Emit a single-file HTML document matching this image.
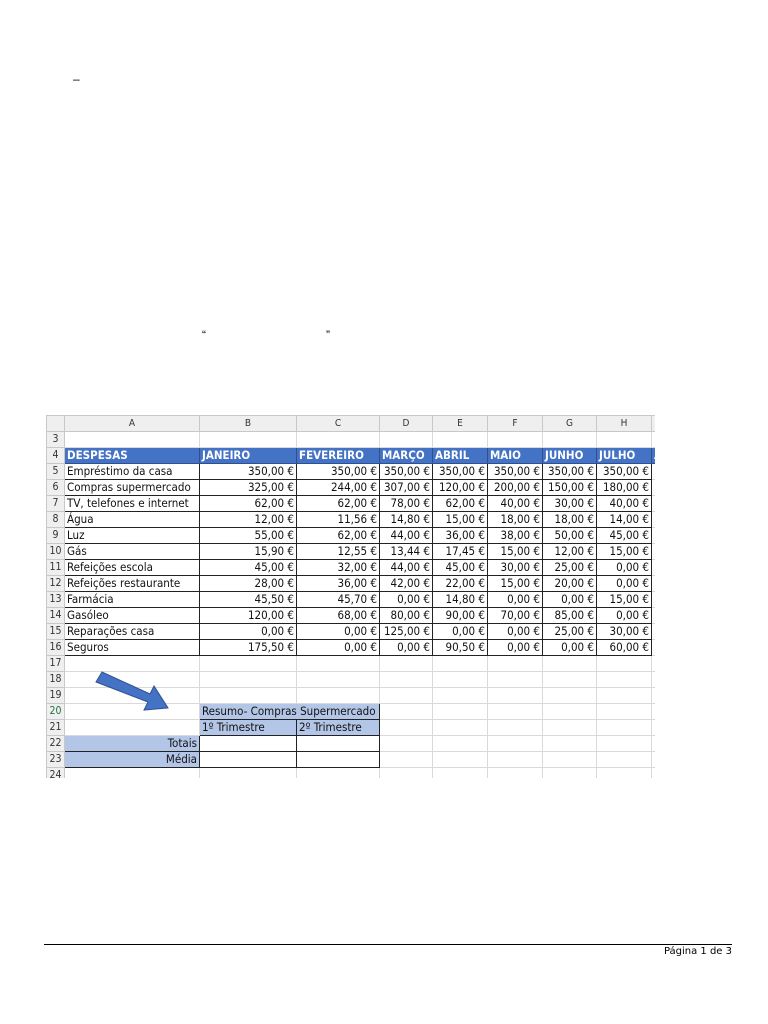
<!DOCTYPE html>
<html><head><meta charset="utf-8"><style>
body{margin:0;width:768px;height:1024px;background:#fff;position:relative;overflow:hidden;font-family:"Liberation Sans","DejaVu Sans",sans-serif}
.wrap{position:absolute;left:46px;top:415px;width:609px;height:363px;overflow:hidden}
table{border-collapse:collapse;table-layout:fixed;font-size:11.5px;font-family:"DejaVu Sans Condensed","Liberation Sans",sans-serif;width:635px}
td{height:15px;padding:0 2px;border:1px solid #d9d9d9;white-space:nowrap;overflow:hidden;line-height:15px;color:#111}
td.n{background:#efefef;color:#333;font-size:10.5px;padding:0;text-align:center;border-color:#c8c8c8}
tr.h td{background:#efefef;text-align:center;font-size:10px;color:#333;border-color:#c8c8c8}
tr.b td.c{background:#4472c4;color:#fff;font-weight:bold;border-color:#2f4f8f}
td.d{border:1px solid #222;text-align:right}
td.l{border:1px solid #222;text-align:left}
td.s{background:#b4c6e7;border:1px solid #222}
td.w{border:1px solid #222}
.foot{position:absolute;left:44px;top:944px;width:688px;border-top:1px solid #000}
</style></head><body>
<div style="position:absolute;left:73px;top:72px;font-size:12px">–</div>
<div style="position:absolute;left:202px;top:328px;font-size:12px">“</div>
<div style="position:absolute;left:326px;top:328px;font-size:12px">”</div>
<div class="wrap"><table>
<colgroup><col style="width:18px"><col style="width:135px"><col style="width:97px"><col style="width:83px"><col style="width:53px"><col style="width:55px"><col style="width:55px"><col style="width:54px"><col style="width:55px"><col style="width:30px"></colgroup>
<tr class="h"><td></td><td>A</td><td>B</td><td>C</td><td>D</td><td>E</td><td>F</td><td>G</td><td>H</td><td></td></tr>
<tr><td class="n">3</td><td></td><td></td><td></td><td></td><td></td><td></td><td></td><td></td><td></td></tr>
<tr class="b"><td class="n">4</td><td class="c">DESPESAS</td><td class="c">JANEIRO</td><td class="c">FEVEREIRO</td><td class="c">MARÇO</td><td class="c">ABRIL</td><td class="c">MAIO</td><td class="c">JUNHO</td><td class="c">JULHO</td><td class="c">A</td></tr>
<tr><td class="n">5</td><td class="l">Empréstimo da casa</td><td class="d">350,00 €</td><td class="d">350,00 €</td><td class="d">350,00 €</td><td class="d">350,00 €</td><td class="d">350,00 €</td><td class="d">350,00 €</td><td class="d">350,00 €</td><td></td></tr>
<tr><td class="n">6</td><td class="l">Compras supermercado</td><td class="d">325,00 €</td><td class="d">244,00 €</td><td class="d">307,00 €</td><td class="d">120,00 €</td><td class="d">200,00 €</td><td class="d">150,00 €</td><td class="d">180,00 €</td><td></td></tr>
<tr><td class="n">7</td><td class="l">TV, telefones e internet</td><td class="d">62,00 €</td><td class="d">62,00 €</td><td class="d">78,00 €</td><td class="d">62,00 €</td><td class="d">40,00 €</td><td class="d">30,00 €</td><td class="d">40,00 €</td><td></td></tr>
<tr><td class="n">8</td><td class="l">Água</td><td class="d">12,00 €</td><td class="d">11,56 €</td><td class="d">14,80 €</td><td class="d">15,00 €</td><td class="d">18,00 €</td><td class="d">18,00 €</td><td class="d">14,00 €</td><td></td></tr>
<tr><td class="n">9</td><td class="l">Luz</td><td class="d">55,00 €</td><td class="d">62,00 €</td><td class="d">44,00 €</td><td class="d">36,00 €</td><td class="d">38,00 €</td><td class="d">50,00 €</td><td class="d">45,00 €</td><td></td></tr>
<tr><td class="n">10</td><td class="l">Gás</td><td class="d">15,90 €</td><td class="d">12,55 €</td><td class="d">13,44 €</td><td class="d">17,45 €</td><td class="d">15,00 €</td><td class="d">12,00 €</td><td class="d">15,00 €</td><td></td></tr>
<tr><td class="n">11</td><td class="l">Refeições escola</td><td class="d">45,00 €</td><td class="d">32,00 €</td><td class="d">44,00 €</td><td class="d">45,00 €</td><td class="d">30,00 €</td><td class="d">25,00 €</td><td class="d">0,00 €</td><td></td></tr>
<tr><td class="n">12</td><td class="l">Refeições restaurante</td><td class="d">28,00 €</td><td class="d">36,00 €</td><td class="d">42,00 €</td><td class="d">22,00 €</td><td class="d">15,00 €</td><td class="d">20,00 €</td><td class="d">0,00 €</td><td></td></tr>
<tr><td class="n">13</td><td class="l">Farmácia</td><td class="d">45,50 €</td><td class="d">45,70 €</td><td class="d">0,00 €</td><td class="d">14,80 €</td><td class="d">0,00 €</td><td class="d">0,00 €</td><td class="d">15,00 €</td><td></td></tr>
<tr><td class="n">14</td><td class="l">Gasóleo</td><td class="d">120,00 €</td><td class="d">68,00 €</td><td class="d">80,00 €</td><td class="d">90,00 €</td><td class="d">70,00 €</td><td class="d">85,00 €</td><td class="d">0,00 €</td><td></td></tr>
<tr><td class="n">15</td><td class="l">Reparações casa</td><td class="d">0,00 €</td><td class="d">0,00 €</td><td class="d">125,00 €</td><td class="d">0,00 €</td><td class="d">0,00 €</td><td class="d">25,00 €</td><td class="d">30,00 €</td><td></td></tr>
<tr><td class="n">16</td><td class="l">Seguros</td><td class="d">175,50 €</td><td class="d">0,00 €</td><td class="d">0,00 €</td><td class="d">90,50 €</td><td class="d">0,00 €</td><td class="d">0,00 €</td><td class="d">60,00 €</td><td></td></tr>
<tr><td class="n">17</td><td></td><td></td><td></td><td></td><td></td><td></td><td></td><td></td><td></td></tr>
<tr><td class="n">18</td><td></td><td></td><td></td><td></td><td></td><td></td><td></td><td></td><td></td></tr>
<tr><td class="n">19</td><td></td><td></td><td></td><td></td><td></td><td></td><td></td><td></td><td></td></tr>
<tr><td class="n" style="color:#217346">20</td><td></td><td class="s" colspan="2">Resumo- Compras Supermercado</td><td></td><td></td><td></td><td></td><td></td><td></td></tr>
<tr><td class="n">21</td><td></td><td class="s">1º Trimestre</td><td class="s">2º Trimestre</td><td></td><td></td><td></td><td></td><td></td><td></td></tr>
<tr><td class="n">22</td><td class="s" style="text-align:right">Totais</td><td class="w"></td><td class="w"></td><td></td><td></td><td></td><td></td><td></td><td></td></tr>
<tr><td class="n">23</td><td class="s" style="text-align:right">Média</td><td class="w"></td><td class="w"></td><td></td><td></td><td></td><td></td><td></td><td></td></tr>
<tr><td class="n">24</td><td></td><td></td><td></td><td></td><td></td><td></td><td></td><td></td><td></td></tr>
</table></div>
<svg style="position:absolute;left:94px;top:670px" width="78" height="44"><polygon points="2,12 8,2 56,24 60,16 74,38 50,40 54,32" fill="#4472c4" stroke="#2f528f" stroke-width="1"/></svg>
<div class="foot"></div>
<div style="position:absolute;right:36px;top:946px;font-size:10px;font-family:'DejaVu Sans',sans-serif">Página 1 de 3</div>
</body></html>
